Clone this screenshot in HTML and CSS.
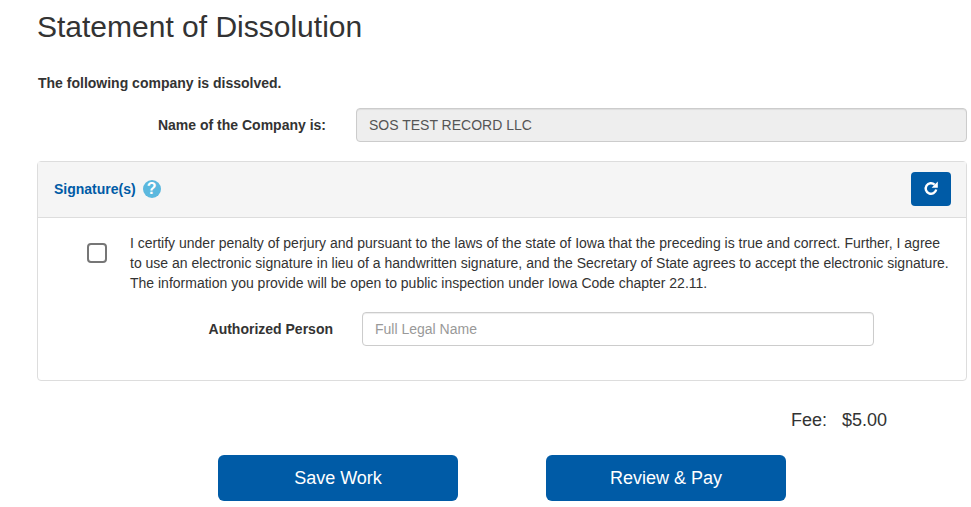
FILE: index.html
```html
<!DOCTYPE html>
<html>

<head>
  <meta charset="UTF-8">
  <meta name="viewport" content="width=device-width, initial-scale=1">
  <title>Statement of Dissolution</title>
  <link rel="stylesheet" href="styles.css">
</head>

<body>
  <div class="container">
    <h1 class="title">Statement of Dissolution</h1>
    <p class="intro">The following company is dissolved.</p>

    <div class="company-row">
      <label class="company-label">Name of the Company is:</label>
      <div class="company-value">SOS TEST RECORD LLC</div>
    </div>

    <div class="panel">
      <div class="panel-heading">
        <span class="panel-title">Signature(s)</span>
        <span class="help-icon">?</span>
        <button class="refresh-btn" aria-label="Refresh">
          <svg width="16" height="16" viewBox="0 1 16 16">
            <path d="M13.2 9.6A5.3 5.3 0 1 1 11.6 4.6" fill="none" stroke="#fff" stroke-width="2.4" />
            <path d="M14.8 1.6v6.2H8.6z" fill="#fff" />
          </svg>
        </button>
      </div>
      <div class="panel-body">
        <div class="certify-row">
          <div class="check-cell"><span class="checkbox"></span></div>
          <p class="certify-text">I certify under penalty of perjury and pursuant to the laws of the state of Iowa that the preceding is true and correct. Further, I agree to use an electronic signature in lieu of a handwritten signature, and the Secretary of State agrees to accept the electronic signature. The information you provide will be open to public inspection under Iowa Code chapter 22.11.</p>
        </div>
        <div class="person-row">
          <label class="person-label">Authorized Person</label>
          <input class="person-input" type="text" placeholder="Full Legal Name">
        </div>
      </div>
    </div>

    <div class="fee-row"><span>Fee:</span><span>$5.00</span></div>

    <div class="actions">
      <button class="action-btn">Save Work</button>
      <button class="action-btn">Review &amp; Pay</button>
    </div>
  </div>
</body>

</html>
```

FILE: styles.css
```css
* {
  box-sizing: border-box;
  padding: 0;
  margin: 0;
}

body {
  font-family: "Liberation Sans", Arial, sans-serif;
  color: #333;
  background: #fff;
}

.container {
  padding: 0 4px 0 37px;
}

.title {
  font-size: 30px;
  font-weight: 400;
  line-height: 33px;
  padding-top: 10px;
}

.intro {
  margin-top: 31px;
  font-size: 14px;
  font-weight: 700;
  line-height: 18px;
  margin-left: 1px;
}

.company-row {
  display: flex;
  align-items: center;
  margin-top: 16px;
}

.company-label {
  width: 289px;
  text-align: right;
  font-size: 14px;
  font-weight: 700;
}

.company-value {
  margin-left: 30px;
  flex: 1;
  height: 34px;
  line-height: 32px;
  padding-left: 12px;
  font-size: 14px;
  color: #555;
  background: #eee;
  border: 1px solid #ccc;
  border-radius: 4px;
  box-shadow: inset 0 1px 1px rgba(0, 0, 0, .075);
}

.panel {
  margin-top: 19px;
  height: 220px;
  border: 1px solid #ddd;
  border-radius: 4px;
}

.panel-heading {
  display: flex;
  align-items: center;
  height: 56px;
  padding: 0 15px 1px 16px;
  background: #f5f5f5;
  border-bottom: 1px solid #ddd;
}

.panel-title {
  font-size: 14px;
  font-weight: 700;
  color: #005ba6;
}

.help-icon {
  width: 18px;
  height: 18px;
  margin-left: 7px;
  border-radius: 50%;
  background: #5bb8de;
  color: #fff;
  font-size: 16px;
  font-weight: 700;
  line-height: 18px;
  text-align: center;
}

.refresh-btn {
  display: flex;
  align-items: center;
  justify-content: center;
  width: 40px;
  height: 34px;
  margin-left: auto;
  border: none;
  border-radius: 4px;
  background: #005ba6;
}

.panel-body {
  padding-top: 15px;
}

.certify-row {
  display: flex;
}

.check-cell {
  width: 92px;
  padding: 10px 0 0 49px;
}

.checkbox {
  display: block;
  width: 20px;
  height: 20px;
  background: #fff;
  border: 2px solid #767676;
  border-radius: 4px;
}

.certify-text {
  width: 824px;
  font-size: 14px;
  line-height: 20px;
}

.person-row {
  display: flex;
  align-items: center;
  margin-top: 19px;
}

.person-label {
  width: 295px;
  text-align: right;
  font-size: 14px;
  font-weight: 700;
}

.person-input {
  width: 512px;
  height: 34px;
  margin-left: 29px;
  padding: 0 12px;
  font-family: inherit;
  font-size: 14px;
  color: #555;
  border: 1px solid #ccc;
  border-radius: 4px;
  box-shadow: inset 0 1px 1px rgba(0, 0, 0, .075);
}

.person-input::placeholder {
  color: #999;
  opacity: 1;
}

.fee-row {
  display: flex;
  justify-content: flex-end;
  gap: 15px;
  margin-top: 29px;
  padding-right: 80px;
  font-size: 18px;
  line-height: 20px;
}

.actions {
  display: flex;
  gap: 88px;
  margin-top: 25px;
  margin-left: 181px;
}

.action-btn {
  width: 240px;
  height: 46px;
  border: none;
  border-radius: 6px;
  background: #005ba6;
  color: #fff;
  font-family: inherit;
  font-size: 18px;
}
```
